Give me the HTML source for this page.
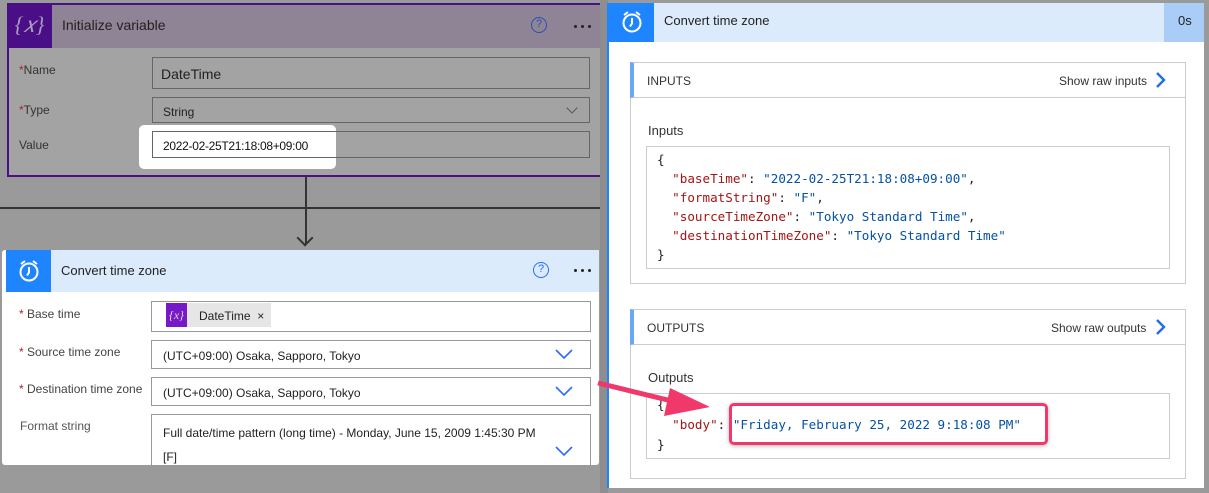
<!DOCTYPE html>
<html><head><meta charset="utf-8"><style>
*{margin:0;padding:0;box-sizing:border-box}
body{width:1209px;height:493px;background:#9a9a9a;position:relative;overflow:hidden;font-family:"Liberation Sans",sans-serif;font-size:12px;color:#222}
.a{position:absolute}
.lbl{position:absolute;font-size:12px;color:#333}
.req{color:#a4262c}
.inp{position:absolute;border:1px solid #666;}
.mono{font-family:"DejaVu Sans Mono","Liberation Mono",monospace;font-size:12.6px}
.k{color:#a31515}.s{color:#0451a5}
.dot{position:absolute;width:3px;height:3px;border-radius:50%;background:#222}
</style></head><body>
<!-- card 1 -->
<div class="a" style="left:7px;top:3px;width:599px;height:174px;border:2px solid #4b0f86;background:#a3a3a3"></div>
<div class="a" style="left:9px;top:5px;width:595px;height:43px;background:#8f8396"></div>
<div class="a" style="left:7px;top:3px;width:45px;height:45px;background:#4a0f86;color:#a99dbc;font-family:'Liberation Serif',serif;font-size:22px;line-height:44px;text-align:center"><i>{𝑥}</i></div>
<div class="a" style="left:62px;top:17px;font-size:14px;color:#222">Initialize variable</div>
<div class="a" style="left:531px;top:17px;width:16px;height:16px;border:1.5px solid #2b4fb0;border-radius:50%;font-size:11px;color:#2b4fb0;text-align:center;line-height:13px">?</div>
<div class="dot" style="left:574px;top:25px"></div><div class="dot" style="left:581px;top:25px"></div><div class="dot" style="left:588px;top:25px"></div>
<div class="lbl" style="left:19px;top:63px"><span class="req">*</span>Name</div>
<div class="inp" style="left:152px;top:57px;width:438px;height:32px;font-size:14px;padding:8px 8px">DateTime</div>
<div class="lbl" style="left:19px;top:103px"><span class="req">*</span>Type</div>
<div class="inp" style="left:152px;top:97px;width:438px;height:26px;padding:7px 10px">String</div>
<div class="a" style="left:568px;top:104px;width:8px;height:8px;border-right:1px solid #555;border-bottom:1px solid #555;transform:rotate(45deg)"></div>
<div class="lbl" style="left:19px;top:138px">Value</div>
<div class="inp" style="left:152px;top:131px;width:438px;height:27px"></div>
<div class="a" style="left:139px;top:125px;width:197px;height:44px;background:#fff;border-radius:5px"></div>
<div class="a" style="left:152px;top:131px;width:184px;height:27px;border:1px solid #666;border-right:none;padding:7px 10px;font-size:12px;color:#111;letter-spacing:-0.3px">2022-02-25T21:18:08+09:00</div>
<!-- connectors -->
<div class="a" style="left:0;top:207px;width:606px;height:2px;background:#333"></div>
<div class="a" style="left:305px;top:177px;width:2px;height:67px;background:#333"></div>
<div class="a" style="left:299px;top:232px;width:12px;height:12px;border-right:2px solid #333;border-bottom:2px solid #333;transform:rotate(45deg)"></div>
<!-- card 2 -->
<div class="a" style="left:2px;top:250px;width:597px;height:215px;background:#fff;border-radius:3px"></div>
<div class="a" style="left:6px;top:250px;width:593px;height:42px;background:#dcebfc"></div>
<div class="a" style="left:6px;top:250px;width:45px;height:42px;background:#1f85ff"></div>
<svg class="a" style="left:16px;top:257px" width="26" height="28" viewBox="0 0 26 28"><circle cx="13" cy="15" r="8.5" fill="none" stroke="#fff" stroke-width="2"/><path d="M13 10v5.5l-2 3M5 7l4-3M21 7l-4-3" stroke="#fff" stroke-width="2" fill="none"/></svg>
<div class="a" style="left:61px;top:263px;font-size:13px;color:#222">Convert time zone</div>
<div class="a" style="left:533px;top:262px;width:16px;height:16px;border:1.5px solid #2b6cff;border-radius:50%;font-size:11px;color:#2b6cff;text-align:center;line-height:13px">?</div>
<div class="dot" style="left:574px;top:269px"></div><div class="dot" style="left:581px;top:269px"></div><div class="dot" style="left:588px;top:269px"></div>
<div class="lbl" style="left:19px;top:307px;color:#444"><span class="req">*</span> Base time</div>
<div class="inp" style="left:151px;top:301px;width:440px;height:31px;border-color:#999"></div>
<div class="a" style="left:166px;top:303px;width:21px;height:24px;background:#7719c8;color:#ddd;font-family:'Liberation Serif',serif;font-size:12px;line-height:24px;text-align:center"><i>{x}</i></div>
<div class="a" style="left:187px;top:303px;width:84px;height:24px;background:#e6e6e6;padding:6px 0 0 12px;font-size:12px;white-space:nowrap">DateTime&nbsp; ×</div>
<div class="lbl" style="left:19px;top:345px;color:#444"><span class="req">*</span> Source time zone</div>
<div class="inp" style="left:151px;top:340px;width:440px;height:29px;border-color:#999;padding:8px 11px">(UTC+09:00) Osaka, Sapporo, Tokyo</div>
<div class="lbl" style="left:19px;top:382px;color:#444"><span class="req">*</span> Destination time zone</div>
<div class="inp" style="left:151px;top:377px;width:440px;height:29px;border-color:#999;padding:8px 11px">(UTC+09:00) Osaka, Sapporo, Tokyo</div>
<div class="lbl" style="left:20px;top:419px;color:#555">Format string</div>
<div class="inp" style="left:151px;top:414px;width:440px;height:51px;border-color:#999;border-bottom:none;padding:6px 11px;line-height:24px">Full date/time pattern (long time) - Monday, June 15, 2009 1:45:30 PM<br>[F]</div>
<svg class="a" style="left:555px;top:348px" width="18" height="12"><path d="M1 2l8 8 8-8" stroke="#2b6cff" stroke-width="1.6" fill="none"/></svg>
<svg class="a" style="left:555px;top:385px" width="18" height="12"><path d="M1 2l8 8 8-8" stroke="#2b6cff" stroke-width="1.6" fill="none"/></svg>
<svg class="a" style="left:555px;top:445px" width="18" height="12"><path d="M1 2l8 8 8-8" stroke="#2b6cff" stroke-width="1.6" fill="none"/></svg>
<!-- right panel -->
<div class="a" style="left:600px;top:0;width:8px;height:493px;background:#8e8e8e"></div>
<div class="a" style="left:607px;top:3px;width:597px;height:485px;background:#fff;border-left:2px solid #1f85ff"></div>
<div class="a" style="left:609px;top:3px;width:595px;height:39px;background:#dcebfc"></div>
<div class="a" style="left:609px;top:3px;width:45px;height:39px;background:#1f85ff"></div>
<svg class="a" style="left:619px;top:8px" width="26" height="28" viewBox="0 0 26 28"><circle cx="13" cy="15" r="8.5" fill="none" stroke="#fff" stroke-width="2"/><path d="M13 10v5.5l-2 3M5 7l4-3M21 7l-4-3" stroke="#fff" stroke-width="2" fill="none"/></svg>
<div class="a" style="left:664px;top:13px;font-size:13px">Convert time zone</div>
<div class="a" style="left:1164px;top:3px;width:40px;height:39px;background:#a9cdf7;font-size:13px;padding:10px 0 0 14px">0s</div>
<!-- inputs -->
<div class="a" style="left:630px;top:62px;width:556px;height:222px;border:1px solid #ccc"></div>
<div class="a" style="left:630px;top:62px;width:556px;height:36px;border:1px solid #ccc;border-left:4px solid #6aa8f7"></div>
<div class="a" style="left:647px;top:74px;font-size:12px;color:#333">INPUTS</div>
<div class="a" style="left:1059px;top:74px;font-size:12px;color:#333">Show raw inputs</div>
<svg class="a" style="left:1155px;top:71px" width="12" height="18"><path d="M2 2l7 7-7 7" stroke="#1f6fe0" stroke-width="2.4" fill="none"/></svg>
<div class="a" style="left:648px;top:123px;font-size:13px;color:#333">Inputs</div>
<div class="a mono" style="left:646px;top:146px;width:524px;height:123px;border:1px solid #ccc;padding:3px 10px;line-height:19px;white-space:pre;color:#222">{
  <span class="k">"baseTime"</span>: <span class="s">"2022-02-25T21:18:08+09:00"</span>,
  <span class="k">"formatString"</span>: <span class="s">"F"</span>,
  <span class="k">"sourceTimeZone"</span>: <span class="s">"Tokyo Standard Time"</span>,
  <span class="k">"destinationTimeZone"</span>: <span class="s">"Tokyo Standard Time"</span>
}</div>
<!-- outputs -->
<div class="a" style="left:630px;top:309px;width:556px;height:170px;border:1px solid #ccc"></div>
<div class="a" style="left:630px;top:309px;width:556px;height:36px;border:1px solid #ccc;border-left:4px solid #6aa8f7"></div>
<div class="a" style="left:647px;top:321px;font-size:12px;color:#333">OUTPUTS</div>
<div class="a" style="left:1051px;top:321px;font-size:12px;color:#333">Show raw outputs</div>
<svg class="a" style="left:1155px;top:318px" width="12" height="18"><path d="M2 2l7 7-7 7" stroke="#1f6fe0" stroke-width="2.4" fill="none"/></svg>
<div class="a" style="left:648px;top:370px;font-size:13px;color:#333">Outputs</div>
<div class="a mono" style="left:646px;top:393px;width:524px;height:66px;border:1px solid #ccc;padding:1px 10px;line-height:20px;white-space:pre;color:#222">{
  <span class="k">"body"</span>: <span class="s">"Friday, February 25, 2022 9:18:08 PM"</span>
}</div>
<div class="a" style="left:729px;top:403px;width:319px;height:42px;border:3px solid #f0386b;border-radius:5px;box-shadow:0 1px 4px rgba(0,0,0,.3)"></div>
<svg class="a" style="left:590px;top:370px" width="130" height="50"><path d="M8 13L90 33" stroke="#f0386b" stroke-width="5"/><path d="M80 18L120 37 74 46Z" fill="#f0386b"/></svg>
</body></html>
